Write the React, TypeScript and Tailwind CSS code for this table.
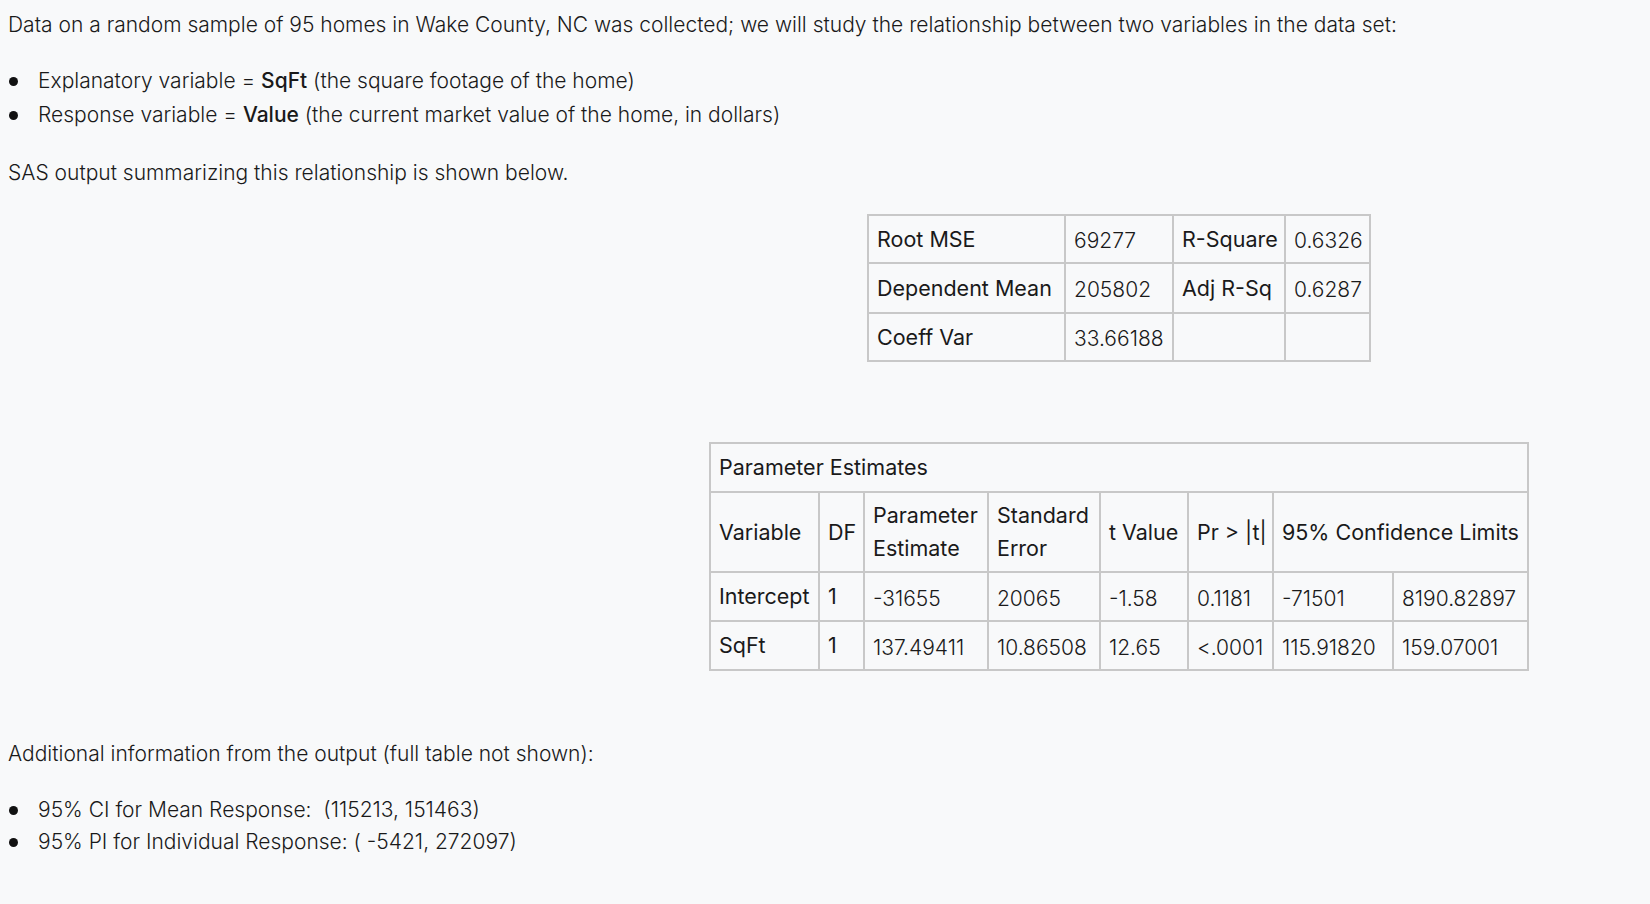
import React from 'react';

const body = "font-['Inter',sans-serif] font-light";
const label = "font-['Inter',sans-serif] font-normal text-[21.5px]";
const num = 'text-[21px] pt-1';

const Bullet: React.FC<{ children: React.ReactNode }> = ({ children }) => (
  <li className="flex items-center">
    <span className="w-[9px] h-[9px] rounded-full bg-[#111] ml-[1px] mr-[20px] shrink-0" />
    <span>{children}</span>
  </li>
);

const App: React.FC = () => {
  const cell = 'border-2 border-[#c8c8c8] px-2 align-middle text-left whitespace-nowrap overflow-visible';
  return (
    <div className={`min-h-screen bg-[#f8f9fa] text-[#1a1a1a] px-2 pt-2 text-[21px] ${body}`}>
      <p className="leading-[34px]">
        Data on a random sample of 95 homes in Wake County, NC was collected; we will study the relationship between two variables in the data set:
      </p>

      <ul className="mt-[22px] leading-[34px]">
        <Bullet>
          Explanatory variable = <b className="font-medium">SqFt</b> (the square footage of the home)
        </Bullet>
        <Bullet>
          Response variable = <b className="font-medium">Value</b> (the current market value of the home, in dollars)
        </Bullet>
      </ul>

      <p className="mt-[24px] leading-[34px]">SAS output summarizing this relationship is shown below.</p>

      {/* SAS output tables */}
      <div className="mt-[24px] pl-[588px] flex flex-col items-center">
        <table className="border-collapse table-fixed w-[502px]">
          <colgroup>
            <col className="w-[197px]" />
            <col className="w-[108px]" />
            <col className="w-[112px]" />
            <col className="w-[85px]" />
          </colgroup>
          <tbody>
            <tr className="h-[48px]">
              <td className={`${cell} ${label}`}>Root MSE</td>
              <td className={`${cell} ${num}`}>69277</td>
              <td className={`${cell} ${label}`}>R-Square</td>
              <td className={`${cell} ${num}`}>0.6326</td>
            </tr>
            <tr className="h-[50px]">
              <td className={`${cell} ${label}`}>Dependent Mean</td>
              <td className={`${cell} ${num}`}>205802</td>
              <td className={`${cell} ${label}`}>Adj R-Sq</td>
              <td className={`${cell} ${num}`}>0.6287</td>
            </tr>
            <tr className="h-[48px]">
              <td className={`${cell} ${label}`}>Coeff Var</td>
              <td className={`${cell} ${num}`}>33.66188</td>
              <td className={cell}></td>
              <td className={cell}></td>
            </tr>
          </tbody>
        </table>

        <table className="border-collapse table-fixed w-[818px] mt-[80px]">
          <colgroup>
            <col className="w-[109px]" />
            <col className="w-[45px]" />
            <col className="w-[124px]" />
            <col className="w-[112px]" />
            <col className="w-[88px]" />
            <col className="w-[85px]" />
            <col className="w-[120px]" />
            <col className="w-[135px]" />
          </colgroup>
          <tbody>
            <tr className="h-[49px]">
              <td colSpan={8} className={`${cell} ${label}`}>Parameter Estimates</td>
            </tr>
            <tr className={`h-[80px] leading-[33px] ${label}`}>
              <td className={cell}>Variable</td>
              <td className={cell}>DF</td>
              <td className={cell}>Parameter<br />Estimate</td>
              <td className={cell}>Standard<br />Error</td>
              <td className={cell}>t Value</td>
              <td className={cell}>Pr &gt; |t|</td>
              <td colSpan={2} className={cell}>95% Confidence Limits</td>
            </tr>
            <tr className="h-[49px]">
              <td className={`${cell} ${label}`}>Intercept</td>
              <td className={`${cell} ${label}`}>1</td>
              <td className={`${cell} ${num}`}>-31655</td>
              <td className={`${cell} ${num}`}>20065</td>
              <td className={`${cell} ${num}`}>-1.58</td>
              <td className={`${cell} ${num}`}>0.1181</td>
              <td className={`${cell} ${num}`}>-71501</td>
              <td className={`${cell} ${num}`}>8190.82897</td>
            </tr>
            <tr className="h-[49px]">
              <td className={`${cell} ${label}`}>SqFt</td>
              <td className={`${cell} ${label}`}>1</td>
              <td className={`${cell} ${num}`}>137.49411</td>
              <td className={`${cell} ${num}`}>10.86508</td>
              <td className={`${cell} ${num}`}>12.65</td>
              <td className={`${cell} ${num}`}>&lt;.0001</td>
              <td className={`${cell} ${num}`}>115.91820</td>
              <td className={`${cell} ${num}`}>159.07001</td>
            </tr>
          </tbody>
        </table>
      </div>

      <p className="mt-[66px] leading-[34px]">Additional information from the output (full table not shown):</p>

      <ul className="mt-[23px] leading-[32px]">
        <Bullet>95% CI for Mean Response:&nbsp; (115213, 151463)</Bullet>
        <Bullet>95% PI for Individual Response: ( -5421, 272097)</Bullet>
      </ul>
    </div>
  );
};

export default App;
